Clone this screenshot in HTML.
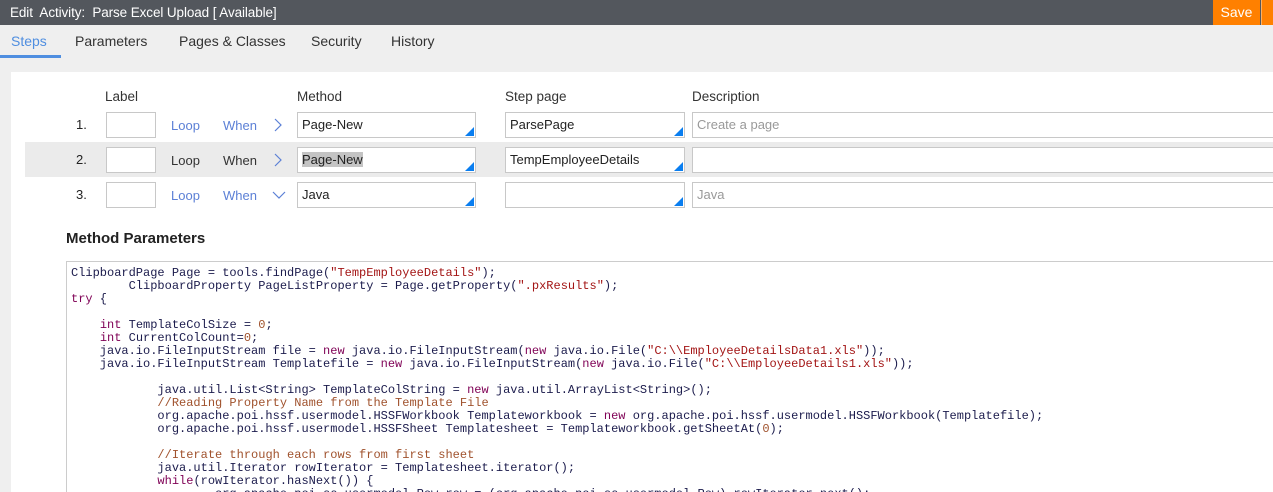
<!DOCTYPE html>
<html><head><meta charset="utf-8"><style>
*{margin:0;padding:0;box-sizing:border-box}
html{width:1273px;height:492px;overflow:hidden}
body{width:1273px;height:492px;overflow:hidden;background:#efefef;font-family:"Liberation Sans",sans-serif;font-size:14px;color:#222;position:relative}
.top{position:absolute;left:0;top:0;width:1273px;height:25px;background:#53575d;color:#fff;font-size:13.5px;line-height:25px;padding-left:10px;letter-spacing:-0.1px}
.save{position:absolute;left:1213px;top:0;width:47px;height:25px;background:#ff8000;color:#fff;text-align:center;line-height:25px;font-size:14px}
.save2{position:absolute;left:1261px;top:0;width:12px;height:25px;background:#ff8000;border-left:1px solid #ffb060}
.tab{position:absolute;top:33px;font-size:14px;color:#333}
.ul{position:absolute;left:0;top:55px;width:61px;height:3px;background:#4f8ee0}
.panel{position:absolute;left:11px;top:72px;width:1262px;height:420px;background:#fff}
.a{position:absolute}
.hd{position:absolute;top:89px;font-size:13.5px;color:#333}
.inp{position:absolute;height:26px;border:1px solid #c8c8c8;background:#fff;font-size:13px;line-height:24px;padding-left:4px;color:#222}
.inp.tri::after{content:"";position:absolute;right:1px;bottom:1px;border-left:9px solid transparent;border-bottom:9px solid #0a7ef0}
.ph{color:#999}
.lnk{position:absolute;font-size:13px;color:#5c80d6}
.code{position:absolute;left:66px;top:261px;width:1210px;height:240px;border:1px solid #ccc;background:#fff;font-family:"Liberation Mono",monospace;font-size:12px;line-height:13px;color:#1b1b4c;padding:5px 0 0 4px;white-space:pre;overflow:hidden}
.k{color:#7f0055}.s{color:#a31515}.c{color:#a0522d}.n{color:#a0522d}
</style></head><body>
<div class="top">Edit&nbsp; Activity:&nbsp; Parse Excel Upload [ Available]</div>
<div class="save">Save</div><div class="save2"></div>
<div class="tab" style="left:11px;color:#4f8ee0">Steps</div>
<div class="tab" style="left:75px">Parameters</div>
<div class="tab" style="left:179px">Pages &amp; Classes</div>
<div class="tab" style="left:311px">Security</div>
<div class="tab" style="left:391px">History</div>
<div class="ul"></div>
<div class="panel"></div>
<div class="hd" style="left:105px">Label</div>
<div class="hd" style="left:297px">Method</div>
<div class="hd" style="left:505px">Step page</div>
<div class="hd" style="left:692px">Description</div>
<div class="a" style="left:25px;top:142px;width:1248px;height:35px;background:#ebebeb"></div>

<div class="a" style="left:76px;top:117px;font-size:13px">1.</div>
<div class="inp" style="left:106px;top:112px;width:50px"></div>
<div class="lnk" style="left:171px;top:118px">Loop</div>
<div class="lnk" style="left:223px;top:118px">When</div>
<svg class="a" style="left:273px;top:118px" width="10" height="14"><path d="M2 1 L8 7 L2 13" fill="none" stroke="#5c80d6" stroke-width="1.2"/></svg>
<div class="inp tri" style="left:297px;top:112px;width:179px">Page-New</div>
<div class="inp tri" style="left:505px;top:112px;width:180px">ParsePage</div>
<div class="inp ph" style="left:692px;top:112px;width:590px">Create a page</div>

<div class="a" style="left:76px;top:152px;font-size:13px">2.</div>
<div class="inp" style="left:106px;top:147px;width:50px"></div>
<div class="lnk" style="left:171px;top:153px;color:#333">Loop</div>
<div class="lnk" style="left:223px;top:153px;color:#333">When</div>
<svg class="a" style="left:273px;top:153px" width="10" height="14"><path d="M2 1 L8 7 L2 13" fill="none" stroke="#5c80d6" stroke-width="1.2"/></svg>
<div class="inp tri" style="left:297px;top:147px;width:179px"><span style="background:#c4c4c4">Page-New</span></div>
<div class="inp tri" style="left:505px;top:147px;width:180px">TempEmployeeDetails</div>
<div class="inp" style="left:692px;top:147px;width:590px"></div>

<div class="a" style="left:76px;top:187px;font-size:13px">3.</div>
<div class="inp" style="left:106px;top:182px;width:50px"></div>
<div class="lnk" style="left:171px;top:188px">Loop</div>
<div class="lnk" style="left:223px;top:188px">When</div>
<svg class="a" style="left:272px;top:190px" width="14" height="10"><path d="M1 2 L7 8 L13 2" fill="none" stroke="#5c80d6" stroke-width="1.2"/></svg>
<div class="inp tri" style="left:297px;top:182px;width:179px">Java</div>
<div class="inp tri" style="left:505px;top:182px;width:180px"></div>
<div class="inp ph" style="left:692px;top:182px;width:590px">Java</div>

<div class="a" style="left:66px;top:230px;font-size:15px;font-weight:bold;color:#222">Method Parameters</div>
<div class="code">ClipboardPage Page = tools.findPage(<span class="s">"TempEmployeeDetails"</span>);
        ClipboardProperty PageListProperty = Page.getProperty(<span class="s">".pxResults"</span>);
<span class="k">try</span> {

    <span class="k">int</span> TemplateColSize = <span class="n">0</span>;
    <span class="k">int</span> CurrentColCount=<span class="n">0</span>;
    java.io.FileInputStream file = <span class="k">new</span> java.io.FileInputStream(<span class="k">new</span> java.io.File(<span class="s">"C:\\EmployeeDetailsData1.xls"</span>));
    java.io.FileInputStream Templatefile = <span class="k">new</span> java.io.FileInputStream(<span class="k">new</span> java.io.File(<span class="s">"C:\\EmployeeDetails1.xls"</span>));

            java.util.List&lt;String&gt; TemplateColString = <span class="k">new</span> java.util.ArrayList&lt;String&gt;();
            <span class="c">//Reading Property Name from the Template File</span>
            org.apache.poi.hssf.usermodel.HSSFWorkbook Templateworkbook = <span class="k">new</span> org.apache.poi.hssf.usermodel.HSSFWorkbook(Templatefile);
            org.apache.poi.hssf.usermodel.HSSFSheet Templatesheet = Templateworkbook.getSheetAt(<span class="n">0</span>);

            <span class="c">//Iterate through each rows from first sheet</span>
            java.util.Iterator rowIterator = Templatesheet.iterator();
            <span class="k">while</span>(rowIterator.hasNext()) {
                    org.apache.poi.ss.usermodel.Row row = (org.apache.poi.ss.usermodel.Row) rowIterator.next();</div>
</body></html>
